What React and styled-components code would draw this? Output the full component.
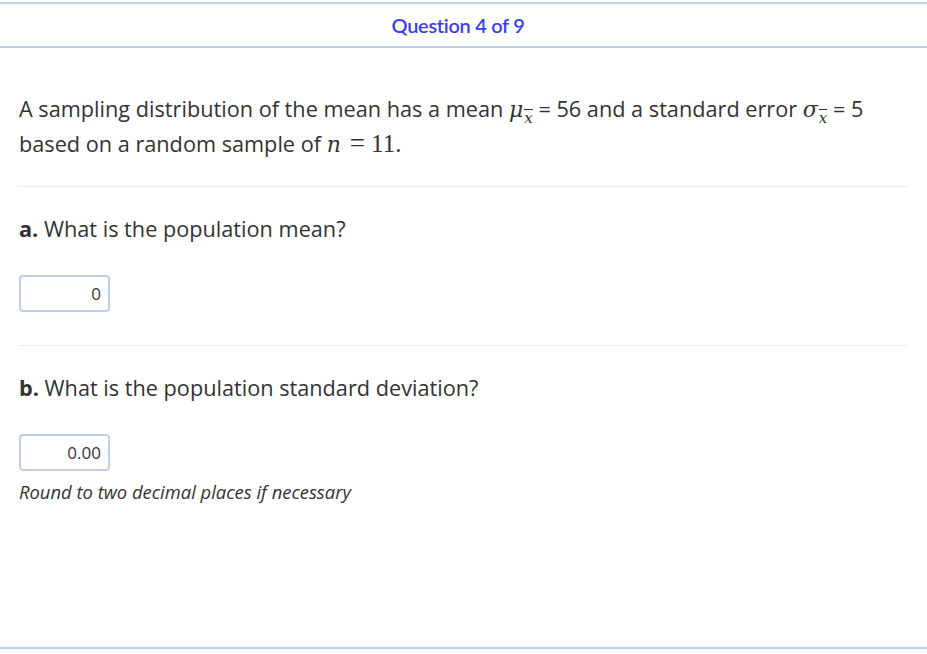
import React from "react";
import styled, { createGlobalStyle } from "styled-components";

const Global = createGlobalStyle`
  html, body { margin: 0; padding: 0; background: #fff; }
  body { font-family: "Open Sans", "Liberation Sans", sans-serif; color: #333; }
`;

const Page = styled.div`
  width: 927px;
  height: 654px;
  display: flex;
  flex-direction: column;
  box-sizing: border-box;
  padding-top: 2px;
`;

const Header = styled.div`
  border-top: 2px solid #bfd0e9;
  border-bottom: 2px solid #bfd0e9;
  height: 42px;
  display: flex;
  align-items: center;
  justify-content: center;
  padding-right: 11px;
  font-family: Lato, "Open Sans", sans-serif;
  font-size: 20px;
  font-weight: 600;
  color: #3c3cf2;
  letter-spacing: -0.3px;
`;

const Body = styled.div`
  flex: 1;
  padding: 44px 19px 0 19px;
`;

const Prompt = styled.p`
  margin: 0;
  font-size: 21.7px;
  line-height: 34px;
  color: #333;
`;

const MathI = styled.span`
  font-family: "DejaVu Serif", "Liberation Serif", serif;
  font-style: italic;
  font-size: 22px;
`;

const Sub = styled.span`
  display: inline-block;
  font-family: "DejaVu Serif", "Liberation Serif", serif;
  font-style: italic;
  font-size: 15px;
  line-height: 1;
  vertical-align: -6px;
  border-top: 1px solid #333;
  padding-top: 1px;
  margin-left: 1px;
`;

const MathR = styled.span`
  font-family: "Liberation Serif", "DejaVu Serif", serif;
  font-size: 25px;
  line-height: 1;
`;

const Rel = styled(MathR)`
  margin: 0 6px 0 9px;
  font-size: 27px;
`;

const Divider = styled.hr`
  border: none;
  border-top: 1px solid #ececec;
  margin: ${(p) => p.$top}px 0 0 0;
`;

const Part = styled.div`
  padding-top: 25px;
`;

const Question = styled.div`
  font-size: 21.7px;
  line-height: 34px;
  color: #333;
  b { font-weight: 700; }
`;

const Input = styled.input`
  display: block;
  box-sizing: border-box;
  width: 91px;
  height: 37px;
  margin-top: 29px;
  border: 2px solid #bdd0ea;
  border-radius: 4px;
  padding: 0 7px;
  text-align: right;
  font-family: "Open Sans", sans-serif;
  font-size: 17px;
  color: #333;
  background: #fff;
  outline: none;
`;

const Hint = styled.div`
  margin-top: 8px;
  font-size: 18.4px;
  font-style: italic;
  color: #333;
`;

const Footer = styled.div`
  border-bottom: 2px solid #bfd0e9;
  margin-bottom: 5px;
`;

export default function App() {
  return (
    <>
      <Global />
      <Page>
        <Header>Question 4 of 9</Header>
        <Body>
          <Prompt>
            A sampling distribution of the mean has a mean{" "}
            <MathI>μ</MathI>
            <Sub>x</Sub> = 56 and a standard error <MathI>σ</MathI>
            <Sub>x</Sub> = 5 based on a random sample of{" "}
            <MathI>n</MathI>
            <Rel>=</Rel>
            <MathR>11.</MathR>
          </Prompt>
          <Divider $top={24} />
          <Part>
            <Question>
              <b>a.</b> What is the population mean?
            </Question>
            <Input defaultValue="0" />
          </Part>
          <Divider $top={33} />
          <Part>
            <Question>
              <b>b.</b> What is the population standard deviation?
            </Question>
            <Input defaultValue="0.00" />
            <Hint>Round to two decimal places if necessary</Hint>
          </Part>
        </Body>
        <Footer />
      </Page>
    </>
  );
}
